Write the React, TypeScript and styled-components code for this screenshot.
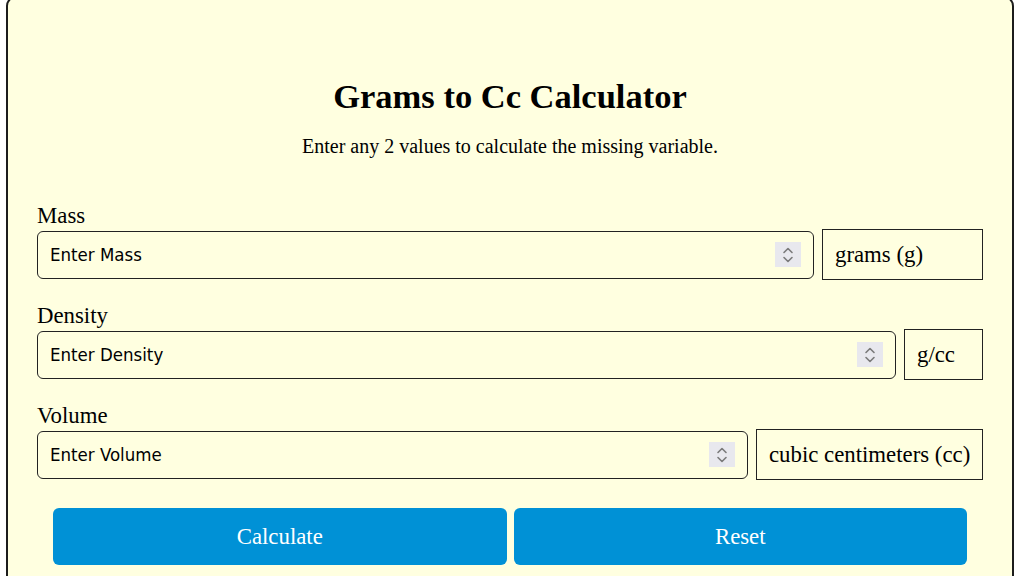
import React from 'react'
import styled, { createGlobalStyle } from 'styled-components'

const GlobalStyle = createGlobalStyle`
  html, body {
    margin: 0;
    padding: 0;
    background: #ffffff;
    overflow: hidden;
  }
`

const Card = styled.main`
  margin: -4px 10px 0 6px;
  padding: 78px 29px 40px;
  background: #ffffe0;
  border: 2px solid #1c1c1c;
  border-radius: 10px;
  font-family: 'Liberation Serif', 'Times New Roman', serif;
  color: #000;
`

const Title = styled.h2`
  margin: 0;
  font-size: 34.5px;
  line-height: 40px;
  font-weight: 700;
  text-align: center;
`

const Subtitle = styled.p`
  margin: 19px 0 0;
  font-size: 20px;
  line-height: 23px;
  text-align: center;
`

const Form = styled.form`
  display: flex;
  flex-direction: column;
  gap: 26px;
  margin-top: 48px;
`

const Field = styled.div`
  display: flex;
  flex-direction: column;
  gap: 3px;
`

const Label = styled.label`
  font-size: 22.8px;
  line-height: 20px;
`

const Row = styled.div`
  display: flex;
  align-items: center;
  gap: 8px;
`

const InputShell = styled.div`
  flex: 1;
  display: flex;
  align-items: center;
  height: 48px;
  box-sizing: border-box;
  border: 1px solid #222;
  border-radius: 6px;
  padding: 0 12px;
`

const Input = styled.input`
  flex: 1;
  min-width: 0;
  border: none;
  outline: none;
  background: transparent;
  padding: 0;
  font-family: 'DejaVu Sans Condensed', 'DejaVu Sans', sans-serif;
  font-size: 18.5px;
  color: #000;

  &::placeholder {
    color: #000;
    opacity: 1;
  }
`

const Spinner = styled.span`
  display: flex;
  align-items: center;
  justify-content: center;
  width: 26px;
  height: 25px;
  background: #e8e8ee;
`

const Unit = styled.div<{ $width: number }>`
  width: ${(p) => p.$width}px;
  height: 51px;
  box-sizing: border-box;
  display: flex;
  align-items: center;
  padding: 0 12px;
  border: 1px solid #222;
  font-size: 22.8px;
  white-space: nowrap;
`

const Buttons = styled.div`
  display: flex;
  gap: 7px;
  padding: 0 16px;
  margin-top: 2px;
`

const Button = styled.button`
  flex: 1;
  height: 57px;
  border: none;
  border-radius: 6px;
  background: #0091d6;
  color: #fff;
  font-family: 'Liberation Serif', 'Times New Roman', serif;
  font-size: 22.8px;
  cursor: pointer;
`

const SpinIcon = () => (
  <svg width="12" height="20" viewBox="0 0 12 20" fill="none" stroke="#7a7a7a" strokeWidth="1.6" strokeLinecap="round" strokeLinejoin="round">
    <path d="M2 7.5 L6 3.5 L10 7.5" />
    <path d="M2 12.5 L6 16.5 L10 12.5" />
  </svg>
)

const fields = [
  { id: 'mass', label: 'Mass', placeholder: 'Enter Mass', unit: 'grams (g)', width: 161 },
  { id: 'density', label: 'Density', placeholder: 'Enter Density', unit: 'g/cc', width: 79 },
  { id: 'volume', label: 'Volume', placeholder: 'Enter Volume', unit: 'cubic centimeters (cc)', width: 227 }
]

const App = (): React.ReactNode => (
  <>
    <GlobalStyle />
    <Card>
      <Title>Grams to Cc Calculator</Title>
      <Subtitle>Enter any 2 values to calculate the missing variable.</Subtitle>
      <Form onSubmit={(e) => e.preventDefault()}>
        {fields.map((f) => (
          <Field key={f.id}>
            <Label htmlFor={f.id}>{f.label}</Label>
            <Row>
              <InputShell>
                <Input id={f.id} type="text" placeholder={f.placeholder} />
                <Spinner>
                  <SpinIcon />
                </Spinner>
              </InputShell>
              <Unit $width={f.width}>{f.unit}</Unit>
            </Row>
          </Field>
        ))}
        <Buttons>
          <Button type="button">Calculate</Button>
          <Button type="button">Reset</Button>
        </Buttons>
      </Form>
    </Card>
  </>
)

export default App
